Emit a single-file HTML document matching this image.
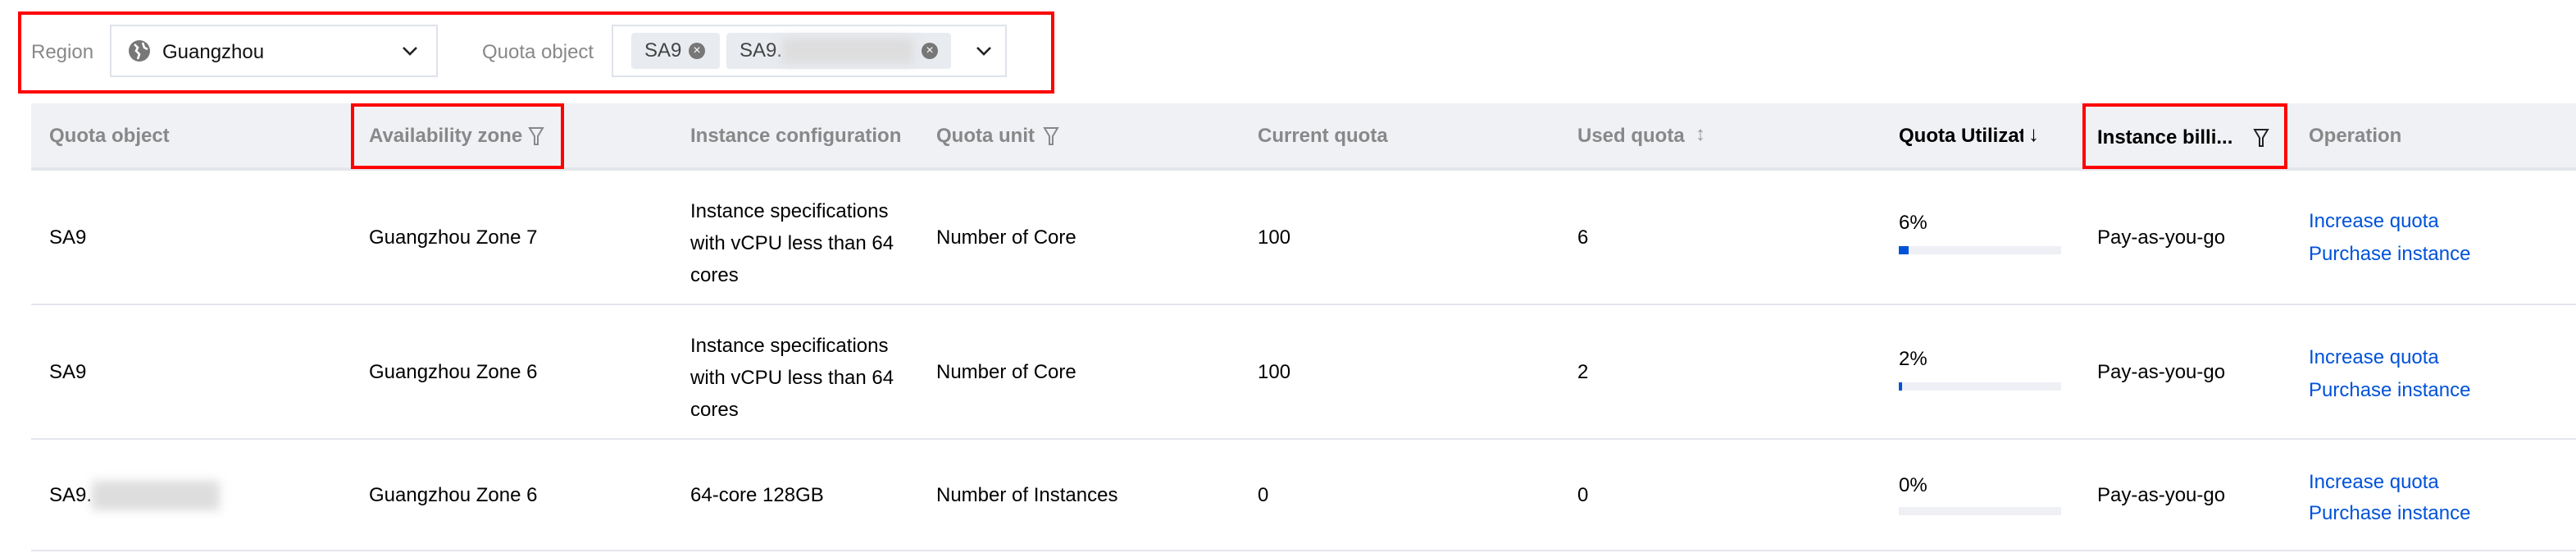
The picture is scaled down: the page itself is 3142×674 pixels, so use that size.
<!DOCTYPE html>
<html><head><meta charset="utf-8"><style>
html{zoom:2}
body{margin:0;width:1571px;height:337px;overflow:hidden;background:#fff;font-family:"Liberation Sans",Arial,sans-serif;font-size:12px;color:#000;position:relative}
.a{position:absolute;white-space:nowrap}
.red{position:absolute;border:2px solid #f00;box-sizing:border-box}
.g{color:#888}
.hd{color:#888;font-weight:bold}
.sel{position:absolute;border:1px solid #dfe3ea;box-sizing:border-box;background:#fff}
.tag{position:absolute;background:#e8ebf0;border-radius:2px;height:22px;top:20px}
.x{display:inline-block;width:10px;height:10px;border-radius:50%;background:#777;color:#fff;font-size:8px;line-height:10px;text-align:center}
.line{position:absolute;left:19px;right:0;height:1px;background:#e3e6eb}
.lk{color:#0052d9}
.bar{position:absolute;width:99px;height:5px;background:#eef0f5}
.bar i{position:absolute;left:0;top:0;height:5px;background:#0052d9}
.blur{position:absolute;background:#ddd;filter:blur(3px)}
</style></head><body>
<div class="red" style="left:11px;top:7px;width:632px;height:50px"></div>
<div class="a g" style="left:19px;top:25px">Region</div>
<div class="sel" style="left:67px;top:15px;width:200px;height:32px"></div>
<svg class="a" style="left:78px;top:24px" width="14" height="14" viewBox="0 0 14 14"><circle cx="7" cy="7" r="6.5" fill="#777"/><path d="M4 3l2 2-1 2 2 2-1 3M9 2l1 3 2 1" stroke="#fff" stroke-width="1.3" fill="none"/></svg>
<div class="a" style="left:99px;top:25px;color:#111">Guangzhou</div>
<svg class="a" style="left:245px;top:28px" width="10" height="7"><path d="M1 1l4 4 4-4" stroke="#222" stroke-width="1.3" fill="none"/></svg>
<div class="a g" style="left:294px;top:25px">Quota object</div>
<div class="sel" style="left:373px;top:15px;width:241px;height:32px"></div>
<div class="tag" style="left:385px;width:54px"><span class="a" style="left:8px;top:4px;color:#444">SA9</span><span class="x a" style="left:35px;top:6px">×</span></div>
<div class="tag" style="left:443px;width:137px"><span class="a" style="left:8px;top:4px;color:#444">SA9.</span><div class="blur" style="left:34px;top:3px;width:80px;height:16px"></div><span class="x a" style="left:119px;top:6px">×</span></div>
<svg class="a" style="left:595px;top:28px" width="10" height="7"><path d="M1 1l4 4 4-4" stroke="#222" stroke-width="1.3" fill="none"/></svg>

<div class="a" style="left:19px;top:63px;width:1552px;height:39px;background:#f0f1f5"></div>
<div class="line" style="top:102px;height:2px"></div>
<div class="a hd" style="left:30px;top:76px">Quota object</div>
<div class="a hd" style="left:225px;top:76px">Availability zone</div>
<svg class="a" style="left:322px;top:77px" width="10" height="12"><path d="M1 1h8L6 6v5H4V6z" stroke="#888" fill="none"/></svg>
<div class="a hd" style="left:421px;top:76px">Instance configuration</div>
<div class="a hd" style="left:571px;top:76px">Quota unit</div>
<svg class="a" style="left:636px;top:77px" width="10" height="12"><path d="M1 1h8L6 6v5H4V6z" stroke="#888" fill="none"/></svg>
<div class="a hd" style="left:767px;top:76px">Current quota</div>
<div class="a hd" style="left:962px;top:76px">Used quota</div>
<div class="a" style="left:1034px;top:75px;color:#999">↕</div>
<div class="a" style="left:1158px;top:76px;font-weight:bold;width:76px;overflow:hidden">Quota Utilization</div>
<div class="a" style="left:1237px;top:74px;font-size:13px;font-weight:bold">↓</div>
<div class="a" style="left:1279px;top:77px;font-weight:bold">Instance billi...</div>
<svg class="a" style="left:1374px;top:78px" width="10" height="12"><path d="M1 1h8L6 6v5H4V6z" stroke="#222" fill="none"/></svg>
<div class="a hd" style="left:1408px;top:76px">Operation</div>
<div class="red" style="left:214px;top:63px;width:130px;height:40px"></div>
<div class="red" style="left:1270px;top:63px;width:125px;height:40px"></div>

<!-- row1 -->
<div class="a" style="left:30px;top:138px">SA9</div>
<div class="a" style="left:225px;top:138px">Guangzhou Zone 7</div>
<div class="a" style="left:421px;top:119px;line-height:19.5px">Instance specifications<br>with vCPU less than 64<br>cores</div>
<div class="a" style="left:571px;top:138px">Number of Core</div>
<div class="a" style="left:767px;top:138px">100</div>
<div class="a" style="left:962px;top:138px">6</div>
<div class="a" style="left:1158px;top:129px">6%</div>
<div class="bar" style="left:1158px;top:150px"><i style="width:6px"></i></div>
<div class="a" style="left:1279px;top:138px">Pay-as-you-go</div>
<div class="a lk" style="left:1408px;top:128px">Increase quota</div>
<div class="a lk" style="left:1408px;top:148px">Purchase instance</div>
<div class="line" style="top:185px"></div>
<!-- row2 -->
<div class="a" style="left:30px;top:220px">SA9</div>
<div class="a" style="left:225px;top:220px">Guangzhou Zone 6</div>
<div class="a" style="left:421px;top:201px;line-height:19.5px">Instance specifications<br>with vCPU less than 64<br>cores</div>
<div class="a" style="left:571px;top:220px">Number of Core</div>
<div class="a" style="left:767px;top:220px">100</div>
<div class="a" style="left:962px;top:220px">2</div>
<div class="a" style="left:1158px;top:212px">2%</div>
<div class="bar" style="left:1158px;top:233px"><i style="width:2px"></i></div>
<div class="a" style="left:1279px;top:220px">Pay-as-you-go</div>
<div class="a lk" style="left:1408px;top:211px">Increase quota</div>
<div class="a lk" style="left:1408px;top:231px">Purchase instance</div>
<div class="line" style="top:267px"></div>
<!-- row3 -->
<div class="a" style="left:30px;top:295px">SA9.</div>
<div class="blur" style="left:56px;top:293px;width:78px;height:18px"></div>
<div class="a" style="left:225px;top:295px">Guangzhou Zone 6</div>
<div class="a" style="left:421px;top:295px">64-core 128GB</div>
<div class="a" style="left:571px;top:295px">Number of Instances</div>
<div class="a" style="left:767px;top:295px">0</div>
<div class="a" style="left:962px;top:295px">0</div>
<div class="a" style="left:1158px;top:289px">0%</div>
<div class="bar" style="left:1158px;top:309px"></div>
<div class="a" style="left:1279px;top:295px">Pay-as-you-go</div>
<div class="a lk" style="left:1408px;top:287px">Increase quota</div>
<div class="a lk" style="left:1408px;top:306px">Purchase instance</div>
<div class="line" style="top:335px"></div>
</body></html>
